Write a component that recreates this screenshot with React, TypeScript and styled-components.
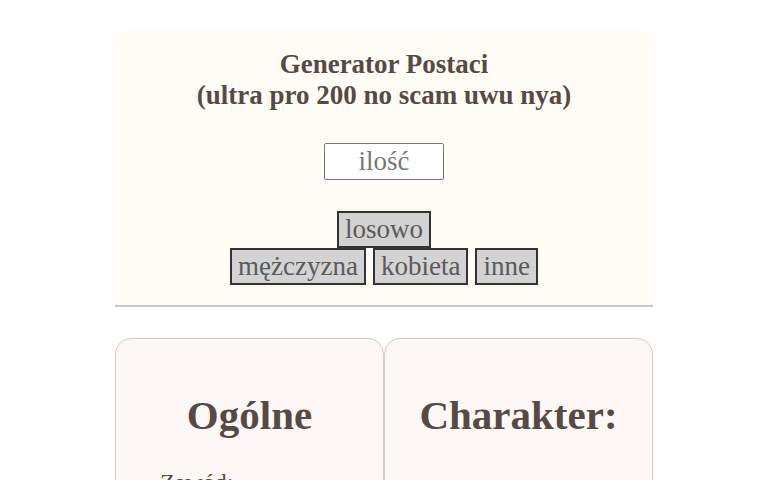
import React from "react";
import styled, { createGlobalStyle } from "styled-components";

const Global = createGlobalStyle`
  html, body { margin: 0; padding: 0; background: #ffffff; }
  body { font-family: "Liberation Serif", "Times New Roman", serif; color: #574a45; }
`;

const Page = styled.div`
  width: 538px;
  margin: 0 auto;
  padding: 30px 0 40px;
`;

const Header = styled.header`
  background: #fffcf5;
  border-radius: 20px 20px 0 0;
  border-bottom: 2px solid #c9c9c9;
  padding: 19px 0 20px;
  display: flex;
  flex-direction: column;
  align-items: center;
`;

const Title = styled.h1`
  margin: 0;
  font-size: 27px;
  line-height: 31px;
  font-weight: bold;
  text-align: center;
  color: #574a45;
`;

const CountInput = styled.input`
  margin-top: 32px;
  width: 120px;
  height: 37px;
  box-sizing: border-box;
  border: 1px solid #777;
  border-radius: 2px;
  background: #fff;
  font-family: "Liberation Serif", serif;
  font-size: 27px;
  text-align: center;
  padding: 0;
  &::placeholder { color: #777; }
`;

const ButtonGroup = styled.div`
  margin-top: 31px;
  display: flex;
  flex-direction: column;
  align-items: center;
`;

const ButtonRow = styled.div`
  display: flex;
  gap: 7px;
`;

const Btn = styled.button`
  font-family: "Liberation Serif", serif;
  font-size: 27px;
  line-height: 31px;
  height: 37px;
  box-sizing: border-box;
  padding: 1px 6px;
  background: #d3d3d3;
  color: #5a5a5a;
  border: 2px solid #333;
  border-radius: 0;
  cursor: pointer;
`;

const Columns = styled.div`
  margin-top: 31px;
  display: grid;
  grid-template-columns: minmax(0, 1fr) minmax(0, 1fr);
`;

const Card = styled.section`
  background: #fdf8f5;
  border: 1px solid #d3ccc8;
  border-radius: 16px;
  padding-bottom: 24px;
  box-sizing: border-box;
`;

const CardTitle = styled.h2`
  margin: 53px 0 0;
  font-size: 41px;
  line-height: 46px;
  font-weight: bold;
  text-align: center;
  color: #574a45;
`;

const Field = styled.p`
  margin: 30px 0 0;
  padding-left: 44px;
  font-size: 24px;
  line-height: 28px;
  color: #574a45;
`;

export default function App() {
  return (
    <>
      <Global />
      <Page>
        <Header>
          <Title>
            Generator Postaci
            <br />
            (ultra pro 200 no scam uwu nya)
          </Title>
          <CountInput placeholder="ilość" />
          <ButtonGroup>
            <ButtonRow>
              <Btn>losowo</Btn>
            </ButtonRow>
            <ButtonRow>
              <Btn>mężczyzna</Btn>
              <Btn>kobieta</Btn>
              <Btn>inne</Btn>
            </ButtonRow>
          </ButtonGroup>
        </Header>
        <Columns>
          <Card>
            <CardTitle>Ogólne</CardTitle>
            <Field>Zawód:</Field>
            <Field>Wiek:</Field>
          </Card>
          <Card>
            <CardTitle>Charakter:</CardTitle>
          </Card>
        </Columns>
      </Page>
    </>
  );
}
